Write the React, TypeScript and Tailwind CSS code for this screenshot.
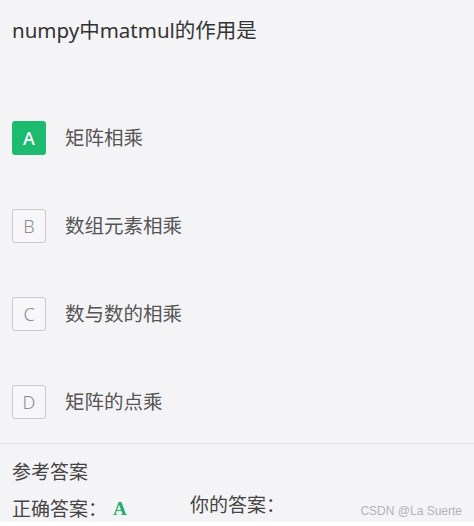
const options = [
    { key: "A", text: "矩阵相乘", selected: true },
    { key: "B", text: "数组元素相乘", selected: false },
    { key: "C", text: "数与数的相乘", selected: false },
    { key: "D", text: "矩阵的点乘", selected: false },
];

const font = { fontFamily: '"Noto Sans", "Noto Sans CJK SC", sans-serif' };

const App = () => {
    return (
        <div
            className="relative w-[474px] h-[526px] overflow-hidden bg-white"
            style={font}
        >
            <div className="h-[522px] bg-[#f4f4f6] flex flex-col">
                <div className="px-3 pt-[18px] text-[20.5px] leading-[24px] text-[#333]">
                    numpy中matmul的作用是
                </div>

                <div className="mt-[79px] flex flex-col gap-[54px] px-3">
                    {options.map((o) => (
                        <div key={o.key} className="flex items-center h-[34px]">
                            {o.selected ? (
                                <div className="w-[34px] h-[34px] rounded-[3px] bg-[#1cbb6f] flex items-center justify-center text-white text-[18px] font-medium">
                                    {o.key}
                                </div>
                            ) : (
                                <div className="w-[34px] h-[34px] rounded-[3px] border border-[#c9c9cc] bg-[#f7f7f9] flex items-center justify-center text-[#8a8a8f] text-[18px] font-light">
                                    {o.key}
                                </div>
                            )}
                            <span className="ml-[19px] text-[19.5px] text-[#555] leading-[24px]">
                                {o.text}
                            </span>
                        </div>
                    ))}
                </div>

                <div className="mt-[24px] border-t border-[#e4e4e8] px-3 pt-[15px] text-[19px] text-[#444]">
                    <div className="h-[33px] leading-[26px]">参考答案</div>
                    <div className="h-[33px] leading-[26px] flex">
                        <span className="w-[178px] flex items-center">
                            正确答案：
                            <span
                                className="ml-[6px] text-[#1faf6c] text-[19px] font-semibold"
                                style={{ fontFamily: '"Liberation Serif", serif' }}
                            >
                                A
                            </span>
                        </span>
                        <span>你的答案：</span>
                    </div>
                </div>
            </div>

            <div
                className="absolute right-[12px] bottom-[6px] text-[12px] text-[#b3b3b8]"
                style={{ fontFamily: '"Liberation Sans", sans-serif' }}
            >
                CSDN @La Suerte
            </div>
        </div>
    );
};

export default App;
